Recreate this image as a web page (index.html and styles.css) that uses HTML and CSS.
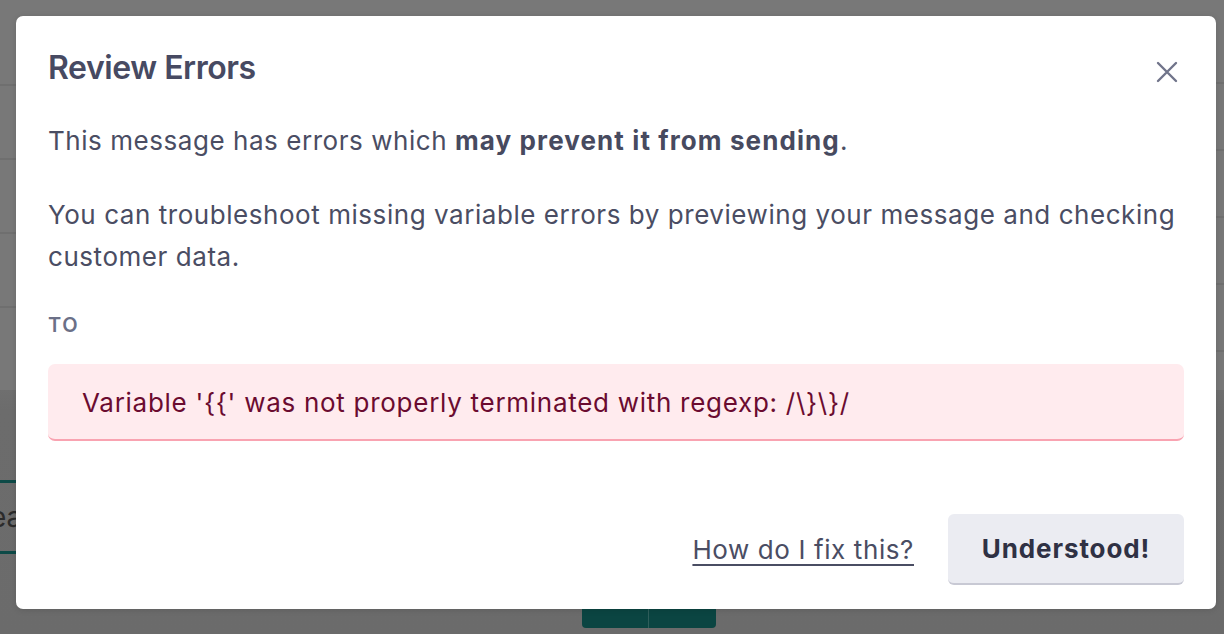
FILE: index.html
```html
<!DOCTYPE html>
<html lang="en">
<head>
<meta charset="utf-8">
<title>Review Errors</title>
<link rel="stylesheet" href="styles.css">
</head>
<body>
<div class="page">
  <div class="bg-top">
    <div class="bg-col bg-left">
      <div class="bg-row r1"></div>
      <div class="bg-row"></div>
      <div class="bg-row"></div>
      <div class="bg-row"></div>
    </div>
    <div class="bg-col bg-right">
      <div class="bg-row rr1"></div>
      <div class="bg-row rr"></div>
      <div class="bg-row rr"></div>
      <div class="bg-row rr"></div>
      <div class="bg-row rr"></div>
    </div>
  </div>
  <div class="bg-bottom">
    <div class="bg-tab">ea</div>
    <div class="bg-toolbar"><span class="tb-btn"><i class="tb-ico"></i></span><span class="tb-btn"><i class="tb-ico"></i></span></div>
  </div>
</div>

<div class="modal">
  <div class="modal-head">
    <h1 class="modal-title">Review Errors</h1>
    <button class="close" aria-label="Close">
      <svg width="22" height="22" viewBox="0 0 22 22"><path d="M2 2 L20 20 M20 2 L2 20" stroke="#70748a" stroke-width="2.4" stroke-linecap="round" fill="none"/></svg>
    </button>
  </div>
  <p class="para">This message has errors which <strong>may prevent it from sending</strong>.</p>
  <p class="para">You can troubleshoot missing variable errors by previewing your message and checking customer data.</p>
  <div class="label">TO</div>
  <div class="error">Variable '{{' was not properly terminated with regexp: /\}\}/</div>
  <div class="footer">
    <a class="help" href="#">How do I fix this?</a>
    <button class="ok">Understood!</button>
  </div>
</div>
</body>
</html>
```

FILE: styles.css
```css
* { box-sizing: border-box; }
html, body { margin: 0; padding: 0; }
body {
  width: 1224px;
  height: 634px;
  overflow: hidden;
  background: #747474;
  font-family: Inter, "Noto Sans", sans-serif;
  position: relative;
}
.page { width: 1224px; height: 634px; display: flex; flex-direction: column; }
.bg-top { height: 390px; display: flex; background: #787878; }
.bg-col { display: flex; flex-direction: column; }
.bg-left { width: 600px; }
.bg-right { flex: 1; }
.bg-row { height: 74px; border-bottom: 2px solid #6f6f6f; }
.r1 { height: 86px; }
.rr1 { height: 84px; }
.rr { height: 67px; }
.bg-bottom {
  flex: 1;
  background: linear-gradient(#6f6f6f, #6c6c6c 20px, #6b6b6b);
  position: relative;
}
.bg-tab {
  position: absolute; left: -40px; top: 90px; width: 120px; height: 74px;
  border-top: 3px solid #0d4a47; border-bottom: 3px solid #0d4a47;
  font-size: 28px; line-height: 68px; padding-left: 30px; color: #2b2b2b;
}
.bg-toolbar {
  position: absolute; left: 582px; top: 190px; width: 134px; height: 48px;
  background: #0b4542; border-radius: 4px; display: flex; gap: 2px;
}
.tb-btn { flex: 1; border-right: 1px solid #2f5e5b; position: relative; }
.tb-btn:last-child { border-right: 0; }
.tb-ico {
  position: absolute; left: 20px; top: 14px; width: 26px; height: 8px;
  border: 2px solid #6f8482; border-top: 0;
}

.modal {
  position: absolute;
  left: 16px; top: 16px;
  width: 1200px; height: 593px;
  background: #fff;
  border-radius: 7px;
  box-shadow: 0 1px 6px rgba(0,0,0,0.12);
  padding: 32px 32px 24px 32px;
  display: flex; flex-direction: column;
  color: #4a4d63;
}
.modal-head { display: flex; justify-content: space-between; align-items: flex-start; }
.modal-title {
  margin: 0; font-size: 32px; line-height: 40px; font-weight: 600; color: #474a62;
  letter-spacing: -0.45px;
}
.close {
  border: 0; background: none; padding: 0; margin: 13px 6px 0 0;
  width: 22px; height: 22px; display: block;
}
.close svg { display: block; }
.para {
  margin: 32px 0 0; font-size: 26px; line-height: 42px; color: #4a4d63;
  letter-spacing: 0.55px;
}
.para strong { font-weight: 700; color: #474a5f; letter-spacing: 1.1px; }
.label {
  margin-top: 31px; font-size: 20px; line-height: 32px; font-weight: 600;
  color: #6b7087; letter-spacing: 0.08em;
}
.error {
  margin-top: 23px;
  background: #ffebee;
  border-bottom: 2px solid #f9a3b1;
  border-radius: 7px;
  padding: 18px 34px 15px;
  font-size: 26px; line-height: 42px;
  color: #6b0b30;
  letter-spacing: 0.72px;
}
.footer {
  margin-top: auto;
  display: flex; justify-content: flex-end; align-items: center; gap: 34px;
}
.help {
  font-size: 26px; line-height: 42px; color: #4a4d63;
  letter-spacing: 0.6px;
  text-decoration: underline; text-underline-offset: 5px; text-decoration-thickness: 2px;
}
.ok {
  font-family: inherit;
  border: 0; border-bottom: 2px solid #c8c9d4;
  background: #ebecf2; border-radius: 6px;
  padding: 14px 0 13px;
  font-size: 26px; line-height: 42px; font-weight: 700; color: #2f3144;
  letter-spacing: 0.9px;
  width: 236px; text-align: center;
}
```
